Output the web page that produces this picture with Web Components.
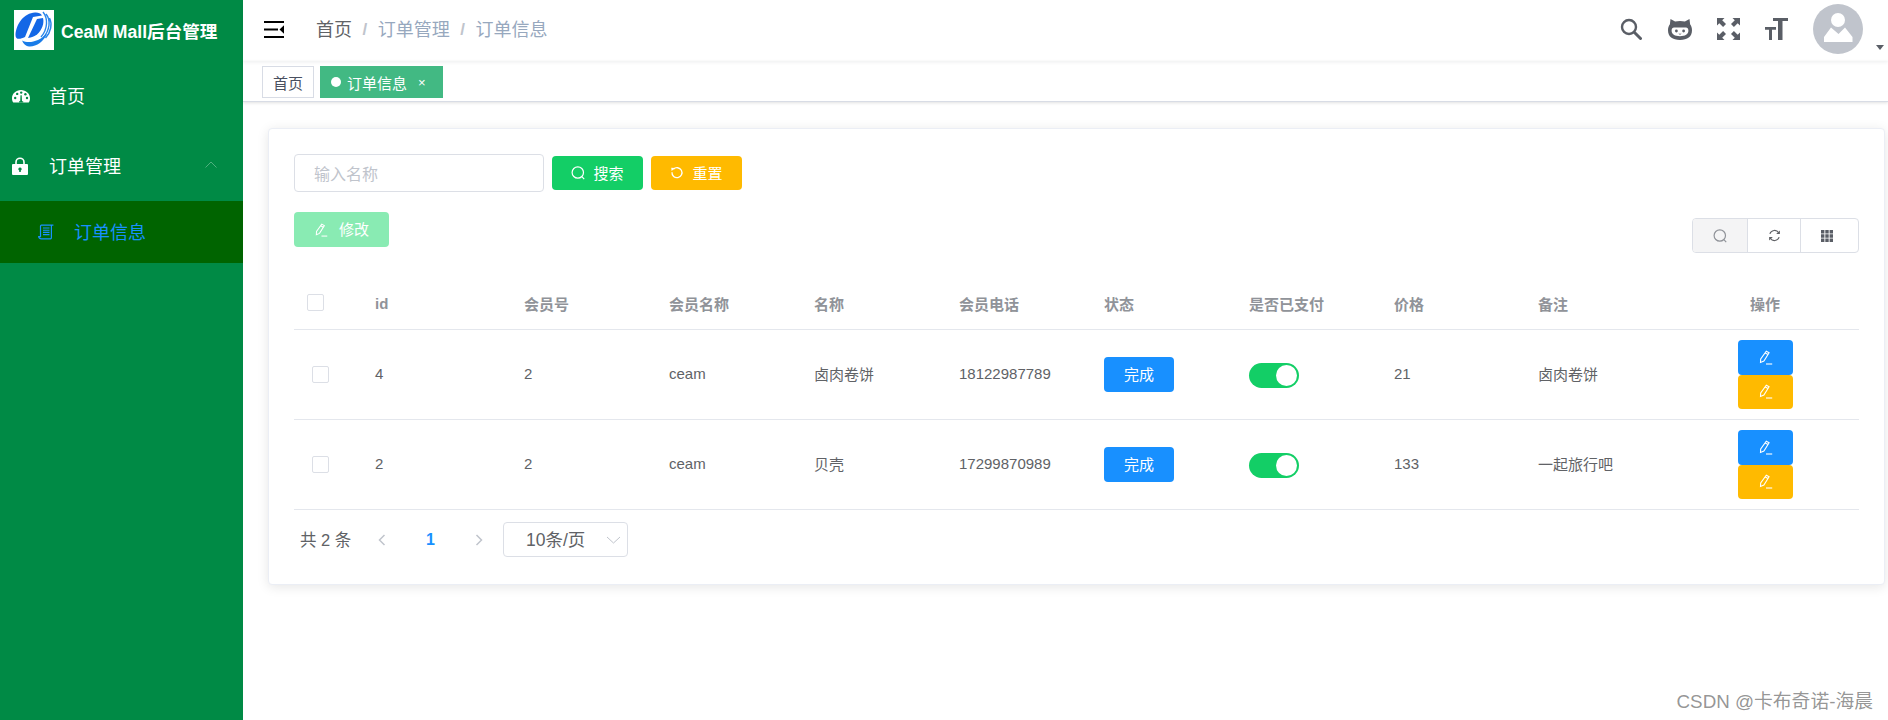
<!DOCTYPE html>
<html lang="zh">
<head>
<meta charset="utf-8">
<title>CeaM Mall</title>
<style>
  html, body { margin: 0; height: 100%; }
  body { font-family: 'Liberation Sans', 'Noto Sans CJK SC', sans-serif; color: #606266; background: #fff; overflow: hidden; }
</style>
</head>
<body>
<app-shell>
  <side-bar slot="side"></side-bar>
  <top-bar slot="main"></top-bar>
  <tag-bar slot="main"></tag-bar>
  <order-card slot="main"></order-card>
</app-shell>
<water-mark>CSDN @卡布奇诺-海晨</water-mark>

<script>
const ICONS = {
  dashboard: `<svg viewBox="0 0 18 13"><path fill="#fff" d="M9 0C4 0 0 3.600 0 8.300c0 1.800.5 3.200 1.300 4.200h15.400c.8-1 1.300-2.400 1.300-4.200C18 3.600 14 0 9 0z"/><g fill="#008a45"><circle cx="3.200" cy="8" r="1.200"/><circle cx="5.200" cy="3.900" r="1.200"/><circle cx="9.200" cy="2.600" r="1.200"/><circle cx="13.400" cy="4.200" r="1.200"/><circle cx="15" cy="8" r="1.200"/><path d="M8.500 5.200h1.200l.3 6h1.200v1.300H7v-1.300h1.200z"/></g></svg>`,
  lock: `<svg viewBox="0 0 16 18"><path fill="none" stroke="#fff" stroke-width="1.600" d="M4 8V5.200a4 4 0 0 1 8 0V8"/><path fill="#fff" fill-rule="evenodd" d="M1 7h14a1 1 0 0 1 1 1v9a1 1 0 0 1-1 1H1a1 1 0 0 1-1-1V8a1 1 0 0 1 1-1zm7 3.400a1.700 1.700 0 0 0-.8 3.200V15h1.600v-1.400A1.700 1.700 0 0 0 8 10.400z"/></svg>`,
  scroll: `<svg viewBox="0 0 16 16" fill="none" stroke="#1890ff" stroke-width="1.200"><path d="M3.500 14.800h9c.8 0 .9-.6.9-1.400V1.200h2M3.400 1.200h12M3.400 1.200c-.6 0-.9.5-.9 1.200v10.200H.7c0 1.400 1.200 2.200 2.800 2.200"/><path d="M5 4h6.500M5 6.200h6.500M5 8.400h6.500M5 10.600h6.500" stroke-width="1.100"/></svg>`,
  hamburger: `<svg viewBox="0 0 20 17"><path fill="#000" d="M0 0h20v2H0zM0 7.500h14v2H0zM0 15h20v2H0zM20 4.200v8.600l-4.500-4.300z"/></svg>`,
  search: `<svg viewBox="0 0 22 22" fill="none" stroke="#5a5e66"><circle cx="9" cy="9" r="7" stroke-width="2.400"/><path d="M14.500 14.500l6 6" stroke-width="3" stroke-linecap="round"/></svg>`,
  github: `<svg viewBox="0 0 24 21"><path fill="#5a5e66" d="M2.500 0l4.600 2.600C8.600 2.200 10.200 2 12 2s3.400.2 4.900.6L21.500 0l.6 5.300c1.200 1.500 1.900 3.500 1.900 6 0 6.500-4.500 9.700-12 9.700S0 17.800 0 11.300c0-2.500.7-4.500 1.900-6z"/><path fill="#fff" d="M6 8.500h12c1.300 0 2.400 1.100 2.400 3 0 4-3.300 5.700-8.400 5.700s-8.400-1.700-8.400-5.700c0-1.900 1.100-3 2.400-3z"/><circle cx="8.400" cy="12" r="1.400" fill="#5a5e66"/><circle cx="15.600" cy="12" r="1.400" fill="#5a5e66"/><path fill="none" stroke="#5a5e66" stroke-width=".8" d="M10.800 14.600c.4.800 2 .8 2.400 0"/></svg>`,
  fullscreen: `<svg viewBox="0 0 23 22"><path fill="#5a5e66" d="M0 0h7.500L5.200 2.300 9 6.100 6.100 9 2.300 5.200 0 7.500zM23 0v7.500l-2.300-2.300L16.900 9 14 6.100l3.800-3.800L15.500 0zM0 22v-7.500l2.300 2.300L6.100 13 9 15.900l-3.800 3.800L7.500 22zM23 22h-7.500l2.300-2.300L14 15.900 16.900 13l3.800 3.800 2.300-2.300z"/></svg>`,
  size: `<svg viewBox="0 0 23 22"><path fill="#5a5e66" d="M8 0h15v3h-5.500v19H13V3H8zM0 9h11v2.800H7V22H4V11.800H0z"/></svg>`,
  avatar: `<svg viewBox="0 0 50 50"><circle cx="25" cy="25" r="25" fill="#c0c4cc"/><circle cx="25" cy="16" r="7" fill="#fff"/><path fill="#fff" d="M18 23.500l7.500 6.500 6.500-6.500 7.500 9.500v5H11v-5z"/></svg>`,
  elSearch: `<svg viewBox="0 0 14 14" fill="none" stroke="currentColor" stroke-width="1.200"><circle cx="6.800" cy="6.500" r="5.700"/><path d="M10.900 10.600l2.300 2.500"/></svg>`,
  elRefresh: `<svg viewBox="0 0 14 14" fill="none" stroke="currentColor" stroke-width="1.300"><path d="M3.400 3.200a5 5 0 1 1-1.400 3"/><path fill="currentColor" stroke="none" d="M1.200 1.800l3.800.2-3.400 3z"/></svg>`,
  elEdit: `<svg viewBox="0 0 14 15" fill="none" stroke="currentColor" stroke-width="1.100"><path d="M7.800 1.200l2.800 1.600-5.200 8.300-3.400 1.400.2-3.500z"/><path d="M6.700 3l2.800 1.600"/><path d="M7.500 14h6.200"/></svg>`,
  sync: `<svg viewBox="0 0 14 14" fill="none" stroke="#606266" stroke-width="1.200"><path d="M2 5.200A5.300 5.300 0 0 1 11.500 4"/><path d="M12 8.800A5.300 5.300 0 0 1 2.500 10"/><path fill="#606266" stroke="none" d="M12.800 1.500v4h-4zM1.200 12.500v-4h4z"/></svg>`,
  grid: `<svg viewBox="0 0 12 12"><path fill="#5a5e66" d="M0 0h3.400v3.400H0zM4.300 0h3.400v3.400H4.300zM8.600 0H12v3.400H8.600zM0 4.300h3.400v3.400H0zM4.300 4.300h3.400v3.400H4.300zM8.600 4.300H12v3.400H8.600zM0 8.600h3.400V12H0zM4.300 8.600h3.400V12H4.300zM8.600 8.600H12V12H8.600z"/></svg>`,
  logo: `<svg viewBox="0 0 40 40"><rect width="40" height="40" fill="#fff"/><path fill="#1467e6" d="M1.500 25C2 14 10 3 21 2.500c3-.2 5.500.5 7 3l-9 1.500-8 20C6 29.500 1.500 30 1.500 25z"/><path fill="#1467e6" d="M23 9l6-1c1.500 5-1 12-6 16.500-2.500 2-5.500 3-9 3.500z"/><path fill="none" stroke="#2a86ea" stroke-width="1.400" d="M29 2c5 6 5 17-2 25M32 4c5 6 4 16-3 24M35.500 8c3 6 1.500 14-4 20"/><path fill="#1a7ce8" d="M8 30.500c7 3.500 17 1 25-7-3 8-11 13.500-18 13-3-.2-5.500-2.500-7-6z"/></svg>`
}

class UiIcon extends HTMLElement {
  constructor() {
    super()
    this.attachShadow({ mode: 'open' })
    const w = this.getAttribute('w') || 14
    const h = this.getAttribute('h') || w
    this.shadowRoot.innerHTML = `
      <style>
        :host { display: inline-flex; flex: none; width: ${w}px; height: ${h}px; }
        svg { width: 100%; height: 100%; display: block; }
      </style>
      ${ICONS[this.getAttribute('name')] || ''}`
  }
}
customElements.define('ui-icon', UiIcon)

class AppShell extends HTMLElement {
  constructor() {
    super()
    this.attachShadow({ mode: 'open' })
    this.shadowRoot.innerHTML = `
      <style>
        :host { display: flex; height: 720px; }
        .main { flex: 1; min-width: 0; display: flex; flex-direction: column; }
      </style>
      <slot name="side"></slot>
      <div class="main"><slot name="main"></slot></div>`
  }
}
customElements.define('app-shell', AppShell)

class NavItem extends HTMLElement {
  constructor() {
    super()
    this.attachShadow({ mode: 'open' })
    const chevron = this.hasAttribute('open')
      ? `<svg class="chev" viewBox="0 0 12 7" fill="none" stroke="#4fb07f" stroke-width="1"><path d="M.5 6.500l5.500-5.500 5.500 5.500"/></svg>` : ''
    this.shadowRoot.innerHTML = `
      <style>
        :host { display: flex; align-items: center; height: 70px; padding-left: 12px; color: #fff; font-size: 18px; box-sizing: border-box; }
        :host([sub]) { height: 62px; background: #006400; color: #1890ff; padding-left: 38px; }
        .ico { width: 37px; display: flex; }
        :host([sub]) .ico { width: 36px; }
        .label { margin-top: -2px; }
        .chev { margin-left: auto; margin-right: 26px; margin-top: -3px; width: 12px; height: 7px; }
      </style>
      <span class="ico"><slot name="icon"></slot></span>
      <span class="label"><slot></slot></span>
      ${chevron}`
  }
}
customElements.define('nav-item', NavItem)

class SideBar extends HTMLElement {
  constructor() {
    super()
    this.attachShadow({ mode: 'open' })
    this.shadowRoot.innerHTML = `
      <style>
        :host { display: block; width: 243px; flex: none; background: #008a45; }
        .brand { height: 61px; padding-left: 14px; display: flex; align-items: center; gap: 7px; color: #fff; font-weight: 700; font-size: 17.600px; white-space: nowrap; box-sizing: border-box; }
        .brand ui-icon { margin-top: -2px; }
      </style>
      <div class="brand"><ui-icon name="logo" w="40"></ui-icon><span>CeaM Mall后台管理</span></div>
      <nav-item><ui-icon slot="icon" name="dashboard" w="18" h="13"></ui-icon>首页</nav-item>
      <nav-item open><ui-icon slot="icon" name="lock" w="16" h="18"></ui-icon>订单管理</nav-item>
      <nav-item sub><ui-icon slot="icon" name="scroll" w="16"></ui-icon>订单信息</nav-item>`
  }
}
customElements.define('side-bar', SideBar)

class TopBar extends HTMLElement {
  constructor() {
    super()
    this.attachShadow({ mode: 'open' })
    this.shadowRoot.innerHTML = `
      <style>
        :host { display: flex; align-items: center; height: 61px; flex: none; box-sizing: border-box; padding: 0 4px 3px 21px; box-shadow: 0 1px 4px rgba(0,21,41,.08); position: relative; font-size: 18px; }
        .crumbs { margin-left: 32px; display: flex; align-items: center; color: #97a8be; margin-top: -2px; }
        .crumbs b { font-weight: 400; color: #606266; }
        .crumbs i { font-style: normal; font-weight: 700; color: #c0c4cc; margin: 0 10.500px; font-size: 17px; position: relative; top: 2px; }
        .tools { margin-left: auto; display: flex; align-items: center; }
        .tools ui-icon { margin-right: 26px; }
        .tools ui-icon + ui-icon { margin-right: 25px; }
        .user { display: flex; position: relative; width: 71px; }
        .caret { position: absolute; left: 63px; top: 41px; width: 0; height: 0; border: 4px solid transparent; border-top: 5px solid #5a5e66; border-bottom: 0; }
      </style>
      <ui-icon name="hamburger" w="20" h="17"></ui-icon>
      <div class="crumbs"><b>首页</b><i>/</i><span>订单管理</span><i>/</i><span>订单信息</span></div>
      <div class="tools">
        <ui-icon name="search" w="22"></ui-icon>
        <ui-icon name="github" w="24" h="21"></ui-icon>
        <ui-icon name="fullscreen" w="23" h="22"></ui-icon>
        <ui-icon name="size" w="23" h="22"></ui-icon>
        <div class="user"><ui-icon name="avatar" w="50" style="margin:0"></ui-icon><span class="caret"></span></div>
      </div>`
  }
}
customElements.define('top-bar', TopBar)

class TagBar extends HTMLElement {
  constructor() {
    super()
    this.attachShadow({ mode: 'open' })
    this.shadowRoot.innerHTML = `
      <style>
        :host { display: flex; align-items: flex-start; gap: 6px; height: 41px; flex: none; box-sizing: border-box; padding: 5px 0 0 19px; border-bottom: 1px solid #d8dce5; box-shadow: 0 1px 3px rgba(0,0,0,.12); font-size: 15px; position: relative; }
        .tag { display: flex; align-items: center; height: 32px; box-sizing: border-box; border: 1px solid #d8dce5; color: #495060; padding: 0 10px; width: 52px; white-space: nowrap; }
        .active { background: #42b983; border-color: #42b983; color: #fff; width: 123px; padding: 0 0 0 10px; }
        .dot { width: 10px; height: 10px; border-radius: 50%; background: #fff; margin-right: 6px; }
        .x { margin-left: 11px; font-size: 13px; }
      </style>
      <span class="tag">首页</span>
      <span class="tag active"><span class="dot"></span>订单信息<span class="x">×</span></span>`
  }
}
customElements.define('tag-bar', TagBar)

class UiBtn extends HTMLElement {
  constructor() {
    super()
    this.attachShadow({ mode: 'open' })
    const icon = this.getAttribute('icon')
    this.shadowRoot.innerHTML = `
      <style>
        :host { display: inline-flex; align-items: center; justify-content: center; gap: 8px; box-sizing: border-box; background: var(--btn, #13ce66); color: #fff; border-radius: 4px; font-size: 15px; }
        :host([disabled]) { --btn: #89ebb3; gap: 11px; }
        :host([bare]) { gap: 0; }
        :host([bare]) span { display: none; }
        span { margin-top: -2px; }
      </style>
      ${icon ? `<ui-icon name="${icon}" w="${this.hasAttribute('bare') ? 15 : 14}"></ui-icon>` : ''}
      <span><slot></slot></span>`
  }
}
customElements.define('ui-btn', UiBtn)

class UiSwitch extends HTMLElement {
  constructor() {
    super()
    this.attachShadow({ mode: 'open' })
    this.shadowRoot.innerHTML = `
      <style>
        :host { display: flex; justify-content: flex-end; align-items: center; width: 50px; height: 25px; box-sizing: border-box; padding-right: 2px; background: #13ce66; border-radius: 13px; }
        i { width: 21px; height: 21px; border-radius: 50%; background: #fff; }
      </style>
      <i></i>`
  }
}
customElements.define('ui-switch', UiSwitch)

class UiCheck extends HTMLElement {
  constructor() {
    super()
    this.attachShadow({ mode: 'open' })
    this.shadowRoot.innerHTML = `<style>:host { display: block; width: 17px; height: 17px; box-sizing: border-box; border: 1px solid #dcdfe6; border-radius: 2px; background: #fff; }</style>`
  }
}
customElements.define('ui-check', UiCheck)

const COLUMNS = '66px 149px repeat(6, 145px) 144px 148px 1fr'

class OrderRow extends HTMLElement {
  constructor() {
    super()
    this.attachShadow({ mode: 'open' })
    const [id, member, name, title, phone, price, remark] = (this.getAttribute('cells') || '').split('|')
    this.shadowRoot.innerHTML = `
      <style>
        :host { display: grid; grid-template-columns: ${COLUMNS}; align-items: center; height: 90px; box-sizing: border-box; border-bottom: 1px solid #e4e7ed; font-size: 15px; color: #606266; }
        .c { padding-left: 15px; position: relative; top: -1px; }
        .plain { padding-left: 15px; }
        .sw { padding-left: 15px; margin-top: 2px; }
        .check { padding-left: 18px; }
        .act { display: flex; flex-direction: column; align-items: center; }
        .act ui-btn { width: 55px; height: 34.500px; }
        .status { width: 70px; height: 35px; --btn: #1890ff; }
        .blue { --btn: #1890ff; }
        .yellow { --btn: #ffba00; }
      </style>
      <div class="check"><ui-check></ui-check></div>
      <div class="c">${id}</div>
      <div class="c">${member}</div>
      <div class="c">${name}</div>
      <div class="c">${title}</div>
      <div class="c">${phone}</div>
      <div class="plain"><ui-btn class="status">完成</ui-btn></div>
      <div class="sw"><ui-switch></ui-switch></div>
      <div class="c">${price}</div>
      <div class="c">${remark}</div>
      <div class="act"><ui-btn class="blue" bare icon="elEdit"></ui-btn><ui-btn class="yellow" bare icon="elEdit"></ui-btn></div>`
  }
}
customElements.define('order-row', OrderRow)

class OrderHead extends HTMLElement {
  constructor() {
    super()
    this.attachShadow({ mode: 'open' })
    const titles = ['id', '会员号', '会员名称', '名称', '会员电话', '状态', '是否已支付', '价格', '备注']
    this.shadowRoot.innerHTML = `
      <style>
        :host { display: grid; grid-template-columns: ${COLUMNS}; align-items: center; height: 55px; box-sizing: border-box; border-bottom: 1px solid #e4e7ed; font-size: 15px; font-weight: 700; color: #909399; }
        .c { padding-left: 15px; position: relative; top: 1px; }
        .check { padding-left: 13px; }
        .op { text-align: center; position: relative; top: 1px; }
      </style>
      <div class="check"><ui-check></ui-check></div>
      ${titles.map(t => `<div class="c">${t}</div>`).join('')}
      <div class="op">操作</div>`
  }
}
customElements.define('order-head', OrderHead)

class PagerBar extends HTMLElement {
  constructor() {
    super()
    this.attachShadow({ mode: 'open' })
    const arrow = d => `<svg class="arrow" viewBox="0 0 8 12" fill="none" stroke="#c0c4cc" stroke-width="1.500"><path d="${d}"/></svg>`
    this.shadowRoot.innerHTML = `
      <style>
        :host { display: flex; align-items: center; height: 35px; font-size: 16.500px; color: #606266; padding-left: 6px; margin-top: 12px; }
        .arrow { width: 8px; height: 12px; flex: none; }
        .total { width: 78px; margin-top: -2px; }
        .num { width: 89px; text-align: center; font-weight: 700; color: #1890ff; font-size: 16px; }
        .select { margin-left: 20px; width: 125px; height: 35px; box-sizing: border-box; border: 1px solid #dcdfe6; border-radius: 4px; display: flex; align-items: center; padding-left: 22px; font-size: 17.500px; }
        .select span { margin-top: -2px; }
        .select svg { margin-left: auto; margin-right: 6px; width: 15px; height: 8px; }
      </style>
      <span class="total">共 2 条</span>
      ${arrow('M6.500 1L1.500 6l5 5')}
      <span class="num">1</span>
      ${arrow('M1.500 1l5 5-5 5')}
      <div class="select"><span>10条/页</span><svg viewBox="0 0 15 8" fill="none" stroke="#c0c4cc" stroke-width="1"><path d="M1 1l6.500 6L14 1"/></svg></div>`
  }
}
customElements.define('pager-bar', PagerBar)

class OrderCard extends HTMLElement {
  constructor() {
    super()
    this.attachShadow({ mode: 'open' })
    this.shadowRoot.innerHTML = `
      <style>
        :host { display: block; box-sizing: border-box; margin: 26px 3px 0 25px; padding: 25px 25px 27px 25px; background: #fff; border: 1px solid #ebeef5; border-radius: 4px; box-shadow: 0 2px 12px rgba(0,0,0,.1); }
        .filter { display: flex; align-items: center; gap: 8px; height: 38px; }
        .input { width: 250px; height: 38px; box-sizing: border-box; border: 1px solid #dcdfe6; border-radius: 4px; font-size: 16px; color: #c0c4cc; display: flex; align-items: center; padding-left: 19px; }
        .filter ui-btn { width: 91px; height: 34px; }
        .yellow { --btn: #ffba00; }
        .actions { display: flex; justify-content: space-between; align-items: flex-start; margin-top: 20px; height: 63px; }
        .actions > ui-btn { width: 95px; height: 35px; }
        .group { display: flex; width: 167px; height: 35px; margin-top: 6px; box-sizing: border-box; border: 1px solid #dcdfe6; border-radius: 4px; color: #909399; overflow: hidden; }
        .group span { display: flex; align-items: center; justify-content: center; box-sizing: border-box; }
        .group span:nth-child(1) { width: 54px; background: #f4f4f5; }
        .group span:nth-child(2) { width: 53px; border-left: 1px solid #dcdfe6; }
        .group span:nth-child(3) { flex: 1; border-left: 1px solid #dcdfe6; padding-right: 6px; }
      </style>
      <div class="filter">
        <div class="input">输入名称</div>
        <ui-btn icon="elSearch">搜索</ui-btn>
        <ui-btn class="yellow" icon="elRefresh">重置</ui-btn>
      </div>
      <div class="actions">
        <ui-btn disabled icon="elEdit">修改</ui-btn>
        <div class="group">
          <span><ui-icon name="elSearch" w="14"></ui-icon></span>
          <span><ui-icon name="sync" w="13"></ui-icon></span>
          <span><ui-icon name="grid" w="12"></ui-icon></span>
        </div>
      </div>
      <order-head></order-head>
      <order-row cells="4|2|ceam|卤肉卷饼|18122987789|21|卤肉卷饼"></order-row>
      <order-row cells="2|2|ceam|贝壳|17299870989|133|一起旅行吧"></order-row>
      <pager-bar></pager-bar>`
  }
}
customElements.define('order-card', OrderCard)

class WaterMark extends HTMLElement {
  constructor() {
    super()
    this.attachShadow({ mode: 'open' })
    this.shadowRoot.innerHTML = `
      <style>:host { position: absolute; right: 15px; top: 690px; font-size: 18.800px; line-height: 24px; color: rgba(90,90,90,.65); white-space: nowrap; }</style>
      <slot></slot>`
  }
}
customElements.define('water-mark', WaterMark)
</script>
</body>
</html>
